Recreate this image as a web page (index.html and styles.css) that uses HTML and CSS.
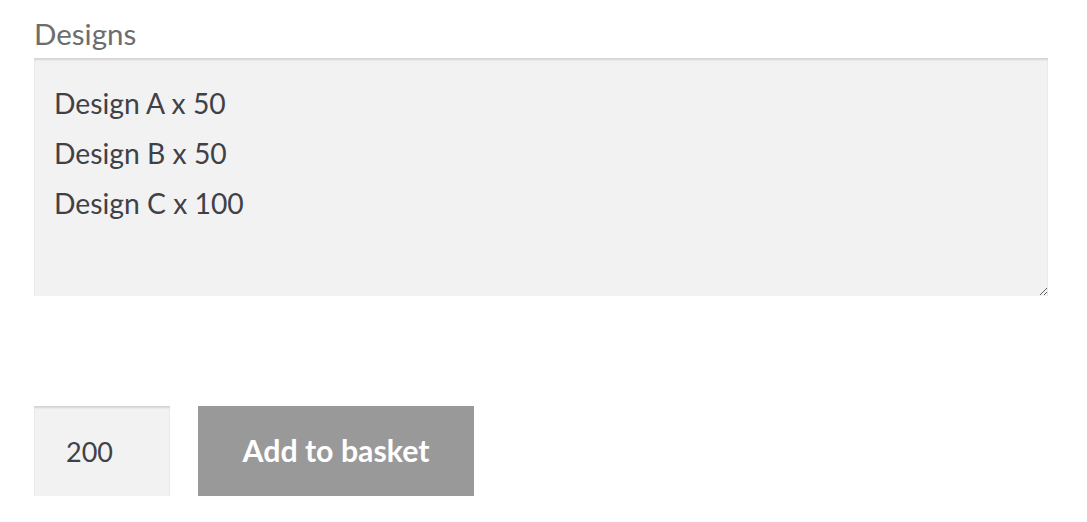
FILE: index.html
```html
<!DOCTYPE html>
<html lang="en">

<head>
    <meta charset="UTF-8">
    <meta name="viewport" content="width=device-width, initial-scale=1.0">
    <title>Product</title>
    <link rel="stylesheet" href="styles.css">
</head>

<body>
    <form class="cart">
        <!-- 设计备注 -->
        <div class="field">
            <label class="field-label" for="designs">Designs</label>
            <textarea id="designs" class="designs">Design A x 50
Design B x 50
Design C x 100</textarea>
        </div>
        <!-- 数量与按钮 -->
        <div class="actions">
            <input type="number" class="qty" value="200" min="1">
            <button type="button" class="add-btn" disabled>Add to basket</button>
        </div>
    </form>
</body>

</html>
```
FILE: styles.css
```css
body {
    margin: 0;
    padding: 0;
    background-color: #fff;
    font-family: Lato, "Open Sans", sans-serif;
    color: #43454b;
}

.cart {
    padding: 18px 39px 0 34px;
}

/* 标签 */
.field-label {
    display: block;
    font-size: 29.5px;
    line-height: 32px;
    color: #6d6d6d;
    margin-bottom: 8px;
}

/* 文本框 */
.designs {
    display: block;
    box-sizing: border-box;
    width: 100%;
    height: 238px;
    margin: 0;
    padding: 20px 20px;
    border: 0;
    background-color: #f2f2f2;
    box-shadow: inset 0 2px 2px rgba(0, 0, 0, 0.125);
    font-family: inherit;
    font-size: 28.3px;
    line-height: 50px;
    color: #3f4147;
    outline: none;
}

/* 数量与按钮行 */
.actions {
    display: flex;
    gap: 28px;
    margin-top: 110px;
}

.qty {
    box-sizing: border-box;
    width: 136px;
    height: 90px;
    margin: 0;
    padding: 0 0 0 32px;
    border: 0;
    background-color: #f2f2f2;
    box-shadow: inset 0 2px 2px rgba(0, 0, 0, 0.125);
    font-family: inherit;
    font-size: 27px;
    color: #3f4147;
    appearance: textfield;
    -moz-appearance: textfield;
    outline: none;
}

.qty::-webkit-inner-spin-button,
.qty::-webkit-outer-spin-button {
    -webkit-appearance: none;
    margin: 0;
}

.add-btn {
    box-sizing: border-box;
    width: 276px;
    height: 90px;
    margin: 0;
    padding: 0 0 2px;
    border: 0;
    background-color: #999999;
    color: #fff;
    font-family: inherit;
    font-size: 30.3px;
    font-weight: 700;
    cursor: not-allowed;
}
```
